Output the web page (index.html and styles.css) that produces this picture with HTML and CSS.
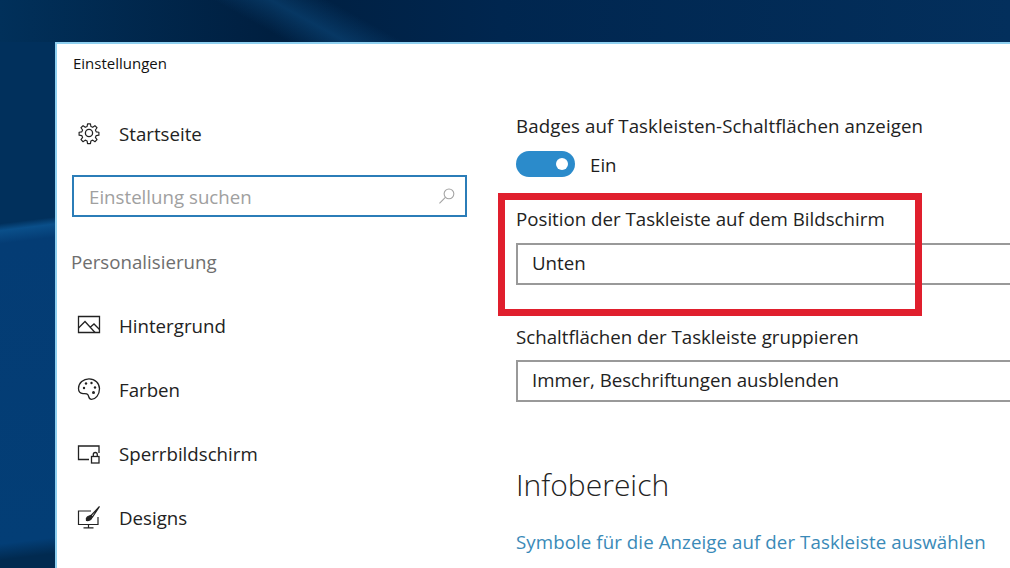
FILE: index.html
```html
<!DOCTYPE html>
<html lang="de">
<head>
<meta charset="utf-8">
<title>Einstellungen</title>
<link rel="stylesheet" href="styles.css">
</head>
<body>
<main class="window">
  <header class="titlebar">Einstellungen</header>
  <div class="columns">
    <nav class="sidebar">
      <a class="home nav-item">
        <svg class="icon" viewBox="0 0 24 24" fill="none" stroke="#222" stroke-width="1.3" stroke-linejoin="round"><circle cx="12" cy="12" r="3.6"/><path d="M10.4 1.8h3.2l.5 3 2 .9 2.5-1.8 2.3 2.3-1.8 2.5.9 2 3 .5v3.2l-3 .5-.9 2 1.8 2.5-2.3 2.3-2.5-1.8-2 .9-.5 3h-3.2l-.5-3-2-.9-2.5 1.8-2.3-2.3 1.8-2.5-.9-2-3-.5v-3.2l3-.5.9-2-1.8-2.5 2.3-2.3 2.5 1.8 2-.9z" transform="translate(1.2 1.2) scale(.9)"/></svg>
        <span>Startseite</span>
      </a>
      <div class="search">
        <span>Einstellung suchen</span>
        <svg class="search-icon" viewBox="0 0 20 20" fill="none" stroke="#a3a3a3" stroke-width="1.2"><circle cx="12.2" cy="7.6" r="5.4"/><path d="M8.2 11.4 1.6 18.2"/></svg>
      </div>
      <h2 class="section">Personalisierung</h2>
      <a class="nav-item">
        <svg class="icon" viewBox="0 0 24 24" fill="none" stroke="#222" stroke-width="1.3"><path d="M1.500 3.500h21v16h-21z"/><path d="M1.500 15 8 8.500l10 11M13.500 14l3.500-3 5.500 5.500"/></svg>
        <span>Hintergrund</span>
      </a>
      <a class="nav-item">
        <svg class="icon" viewBox="0 0 24 24" fill="none" stroke="#222" stroke-width="1.3"><path d="M12 1.800c6 0 10.500 4.300 10.500 10 0 6-4 10.500-8 10.500-3 0-2.500-3-3.500-4.500s-3-1-5-1.200C3 16.300 1.500 14 1.500 11.500 1.500 6 6.500 1.800 12 1.800z"/><circle cx="7" cy="11" r="1.200" fill="#222" stroke="none"/><circle cx="9" cy="6.500" r="1.200" fill="#222" stroke="none"/><circle cx="14.500" cy="6" r="1.200" fill="#222" stroke="none"/><circle cx="18" cy="10.500" r="1.200" fill="#222" stroke="none"/><circle cx="16.500" cy="15.500" r="1.500" fill="#222" stroke="none"/></svg>
        <span>Farben</span>
      </a>
      <a class="nav-item">
        <svg class="icon" viewBox="0 0 24 24" fill="none" stroke="#222" stroke-width="1.3"><path d="M12 18.500H1.500V5h20.500v7"/><rect x="14.500" y="15.500" width="7.500" height="6.500"/><path d="M16.300 15.500v-2a2 2 0 0 1 4 0v2"/></svg>
        <span>Sperrbildschirm</span>
      </a>
      <a class="nav-item">
        <svg class="icon" viewBox="0 0 24 24" fill="none" stroke="#222" stroke-width="1.200"><path d="M14 6H1.500v13.500h19.500V12"/><path d="M11.500 19.500v3M6.500 22.800h10"/><path d="M22.500 1.500 14 10.500l1.500 1.500z"/><path d="M13.500 10.500c-2 .5-5 2-4 5 2.500.3 5-.5 5.500-3.500z" fill="#222"/></svg>
        <span>Designs</span>
      </a>
    </nav>
    <section class="content">
      <p class="label label-wide">Badges auf Taskleisten-Schaltflächen anzeigen</p>
      <div class="toggle-row">
        <span class="toggle"><span class="knob"></span></span>
        <span>Ein</span>
      </div>
      <p class="label label-position">Position der Taskleiste auf dem Bildschirm</p>
      <div class="select">Unten</div>
      <p class="label label-group">Schaltflächen der Taskleiste gruppieren</p>
      <div class="select">Immer, Beschriftungen ausblenden</div>
      <h1 class="heading">Infobereich</h1>
      <a class="link">Symbole für die Anzeige auf der Taskleiste auswählen</a>
    </section>
  </div>
  <div class="highlight"></div>
</main>
</body>
</html>
```
FILE: styles.css
```css
* { box-sizing: border-box; }
html, body { height: 100%; }
body {
  margin: 0;
  height: 568px;
  overflow: hidden;
  padding: 42px 0 0 55px;
  font-family: "Open Sans", "Noto Sans", sans-serif;
  color: #1c1c1c;
  background-color: #01305c;
  background-repeat: no-repeat;
  background-size: 100% 42px, 100% 42px, 55px 100%;
  background-image:
    linear-gradient(29deg, transparent 140px, rgba(12,74,126,.55) 168px, transparent 196px),
    linear-gradient(90deg, #01305a 0, #001f40 270px, #00264f 500px, #032f5c 1010px),
    linear-gradient(173deg, #01305c 222px, #0a4f8a 229px, #043c74 242px, #033e76 540px, #012a50 556px);
}
.window {
  position: relative;
  width: 955px;
  height: 526px;
  background: #fff;
  border: solid #8fd0f0;
  border-width: 2px 0 0 2px;
  overflow: hidden;
}
.titlebar {
  padding: 10px 0 0 16px;
  height: 40px;
  font-size: 15px;
  line-height: 18px;
  color: #111;
}
.columns { display: flex; }
.sidebar { width: 459px; flex: none; padding: 19px 0 0 15px; }
.nav-item {
  display: flex;
  align-items: center;
  height: 64px;
  padding-left: 5px;
  font-size: 18.700px;
  color: #222;
}
.nav-item .icon { width: 24px; height: 24px; margin-right: 18px; flex: none; }
.home { margin-top: -2px; }
.search {
  display: flex;
  align-items: center;
  justify-content: space-between;
  width: 395px;
  height: 42px;
  margin-top: 10px;
  border: 2.500px solid #2b7db8;
  padding: 0 9px 0 15px;
  font-size: 18.700px;
  color: #a0a0a0;
}
.search-icon { width: 18px; height: 18px; flex: none; }
.section {
  margin: 29px 0 15px -1px;
  height: 32px;
  font-size: 18.700px;
  line-height: 32px;
  font-weight: 400;
  color: #6e6e6e;
}
.content { flex: 1; font-size: 18.700px; }
.label { margin: 0; line-height: 24px; color: #222; white-space: nowrap; }
.label-wide { letter-spacing: .09px; }
.content > .label:first-child { margin-top: 30px; }
.toggle-row { display: flex; align-items: center; gap: 15px; margin-top: 13px; height: 26px; }
.toggle {
  display: flex;
  align-items: center;
  justify-content: flex-end;
  width: 59px;
  height: 26px;
  padding-right: 7px;
  border-radius: 13px;
  background: #2b8bcb;
}
.knob { width: 12px; height: 12px; border-radius: 50%; background: #fff; }
.label-position { margin-top: 30px; }
.label-group { margin-top: 40px; }
.select {
  width: 520px;
  height: 42px;
  margin-top: 12px;
  padding-left: 14px;
  border: 2.500px solid #999;
  line-height: 36px;
  color: #222;
  white-space: nowrap;
}
.label-group + .select { margin-top: 11px; }
.heading {
  margin: 61px 0 0;
  font-size: 30px;
  line-height: 44px;
  font-weight: 300;
  color: #222;
}
.link { display: block; margin-top: 23px; line-height: 24px; letter-spacing: .08px; color: #3a8ab8; white-space: nowrap; }
.highlight {
  position: absolute;
  left: 441px;
  top: 149px;
  width: 424px;
  height: 123px;
  border: 7px solid #e01f2d;
}
```
